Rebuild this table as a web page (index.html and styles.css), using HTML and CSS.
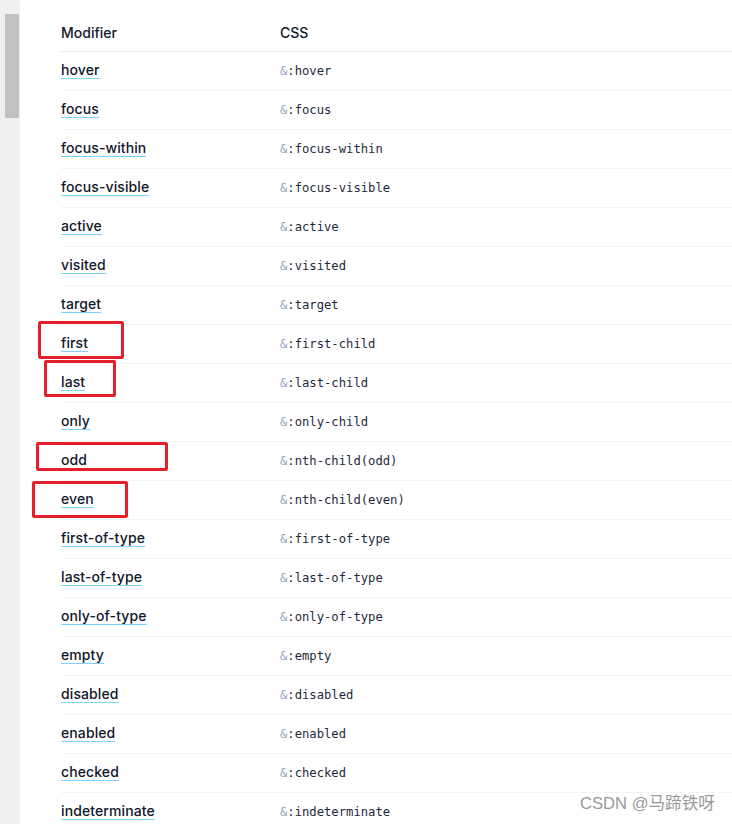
FILE: index.html
```html
<!DOCTYPE html>
<html lang="en">
<head>
<meta charset="utf-8">
<title>Modifiers</title>
<link rel="stylesheet" href="styles.css">
</head>
<body>
<div class="page">
  <div class="gutter"><div class="thumb"></div></div>
  <main class="content">
    <table class="mods">
      <thead>
        <tr><th class="c1">Modifier</th><th class="c2">CSS</th></tr>
      </thead>
      <tbody>
        <tr><td><a class="mod">hover</a></td><td><code><span class="amp">&amp;</span>:hover</code></td></tr>
        <tr><td><a class="mod">focus</a></td><td><code><span class="amp">&amp;</span>:focus</code></td></tr>
        <tr><td><a class="mod">focus-within</a></td><td><code><span class="amp">&amp;</span>:focus-within</code></td></tr>
        <tr><td><a class="mod">focus-visible</a></td><td><code><span class="amp">&amp;</span>:focus-visible</code></td></tr>
        <tr><td><a class="mod">active</a></td><td><code><span class="amp">&amp;</span>:active</code></td></tr>
        <tr><td><a class="mod">visited</a></td><td><code><span class="amp">&amp;</span>:visited</code></td></tr>
        <tr><td><a class="mod">target</a></td><td><code><span class="amp">&amp;</span>:target</code></td></tr>
        <tr><td><a class="mod">first</a></td><td><code><span class="amp">&amp;</span>:first-child</code></td></tr>
        <tr><td><a class="mod">last</a></td><td><code><span class="amp">&amp;</span>:last-child</code></td></tr>
        <tr><td><a class="mod">only</a></td><td><code><span class="amp">&amp;</span>:only-child</code></td></tr>
        <tr><td><a class="mod">odd</a></td><td><code><span class="amp">&amp;</span>:nth-child(odd)</code></td></tr>
        <tr><td><a class="mod">even</a></td><td><code><span class="amp">&amp;</span>:nth-child(even)</code></td></tr>
        <tr><td><a class="mod">first-of-type</a></td><td><code><span class="amp">&amp;</span>:first-of-type</code></td></tr>
        <tr><td><a class="mod">last-of-type</a></td><td><code><span class="amp">&amp;</span>:last-of-type</code></td></tr>
        <tr><td><a class="mod">only-of-type</a></td><td><code><span class="amp">&amp;</span>:only-of-type</code></td></tr>
        <tr><td><a class="mod">empty</a></td><td><code><span class="amp">&amp;</span>:empty</code></td></tr>
        <tr><td><a class="mod">disabled</a></td><td><code><span class="amp">&amp;</span>:disabled</code></td></tr>
        <tr><td><a class="mod">enabled</a></td><td><code><span class="amp">&amp;</span>:enabled</code></td></tr>
        <tr><td><a class="mod">checked</a></td><td><code><span class="amp">&amp;</span>:checked</code></td></tr>
        <tr><td><a class="mod">indeterminate</a></td><td><code><span class="amp">&amp;</span>:indeterminate</code></td></tr>
      </tbody>
    </table>
  </main>
  <div class="mark mark-first"></div>
  <div class="mark mark-last"></div>
  <div class="mark mark-odd"></div>
  <div class="mark mark-even"></div>
  <div class="watermark">CSDN @马蹄铁呀</div>
</div>
</body>
</html>
```

FILE: styles.css
```css
html, body {
  margin: 0;
  padding: 0;
  background: #ffffff;
  overflow: hidden;
}

.page {
  position: relative;
  display: flex;
  width: 732px;
  height: 824px;
  overflow: hidden;
  font-family: Inter, "Noto Sans", sans-serif;
  color: #0f172a;
}

.gutter {
  flex: 0 0 20px;
  background: #f0f0f0;
  padding: 14px 1px 0 5px;
  box-sizing: border-box;
}

.thumb {
  height: 104px;
  background: #c1c1c1;
}

.content {
  flex: 1;
  padding: 14px 0 0 41px;
}

.mods {
  width: 671px;
  border-collapse: collapse;
  font-size: 14px;
  line-height: 20px;
}

.mods th {
  text-align: left;
  font-weight: 500;
  color: #0f172a;
  height: 37px;
  padding: 1px 0 0 0;
  box-sizing: border-box;
  vertical-align: middle;
  border-bottom: 1px solid #e2e8f0;
}

.mods th.c1, .mods td:first-child {
  width: 219px;
}

.mods td {
  height: 38px;
  padding: 0;
  vertical-align: middle;
  border-bottom: 1px solid #f1f5f9;
}

.mods td:first-child {
  height: 36px;
  padding-bottom: 2px;
}

.mod {
  font-weight: 500;
  color: #0f172a;
  border-bottom: 1px solid #7dd3fc;
  text-decoration: none;
  letter-spacing: 0.1px;
}

code {
  font-family: "DejaVu Sans Mono", "Liberation Mono", monospace;
  font-size: 12.2px;
  color: #1e293b;
}

.amp {
  color: #94a3b8;
}

.mark {
  position: absolute;
  border: 3px solid #e51f2a;
  border-radius: 2px;
  box-sizing: border-box;
}

.mark-first { left: 38px; top: 321px; width: 86px; height: 38px; }
.mark-last  { left: 44px; top: 360px; width: 72px; height: 37px; }
.mark-odd   { left: 36px; top: 442px; width: 132px; height: 29px; }
.mark-even  { left: 32px; top: 481px; width: 96px; height: 37px; }

.watermark {
  position: absolute;
  left: 580px;
  top: 794px;
  font-family: "Liberation Sans", "Noto Sans CJK SC", sans-serif;
  font-size: 16.6px;
  line-height: 20px;
  color: #999999;
  text-shadow: 0 0 2px #ffffff;
}
```
